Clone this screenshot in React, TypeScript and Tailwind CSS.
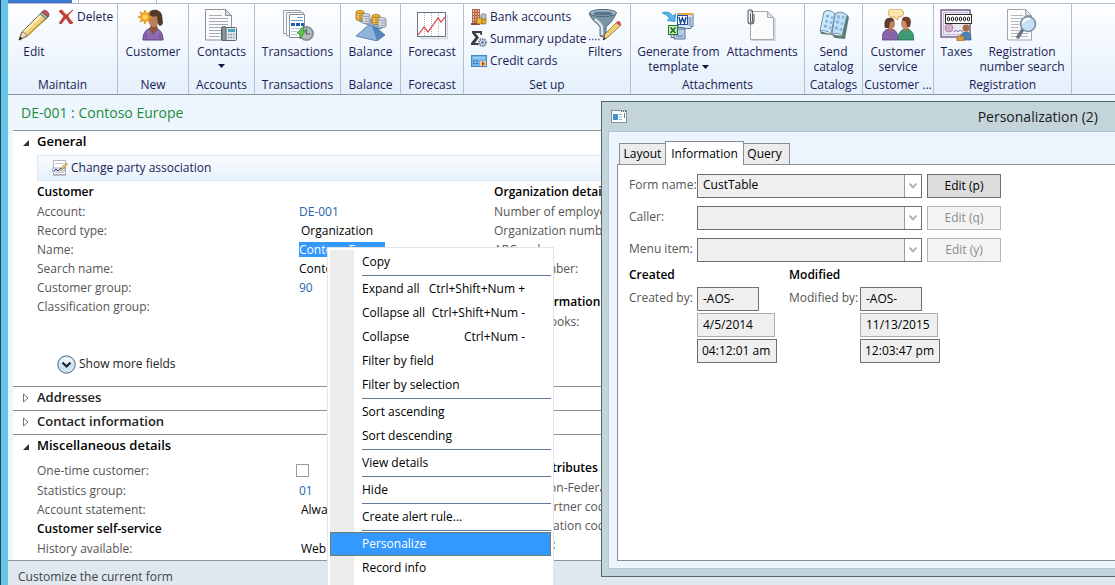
import { useState, type ReactNode } from 'react'
import clsx from 'clsx'

/* ---------- ribbon icons ---------- */

function PencilIcon() {
  return (
    <svg width="32" height="32" viewBox="0 0 32 32">
      <path d="M1 31l3-8L24 3l6 5L9 27z" fill="#f3d580" stroke="#5f5a4c" strokeWidth="1" />
      <path d="M5 24L25 4" stroke="#fff3bd" strokeWidth="2" />
      <path d="M9 27L28 9" stroke="#c69a45" strokeWidth="1.5" />
      <path d="M1 31l3-8c2 0 4 2 5 4z" fill="#eadbc0" stroke="#6b604d" strokeWidth=".8" />
      <path d="M1 31l1.200-3.500 2.300 2z" fill="#222" />
      <path d="M22 5l3-3 6 5-3 3z" fill="#9fb3ad" stroke="#56665f" strokeWidth=".8" />
      <path d="M25 2c2-2 6 1 6 4l-1 2-6-5z" fill="#c8505a" stroke="#7d3038" strokeWidth=".8" />
    </svg>
  )
}

function DeleteIcon() {
  return (
    <svg width="16" height="16" viewBox="0 0 16 16">
      <path d="M1 2l3-1c2 3 3 4 5 5 2-2 4-4 6-5-2 2-4 4-5 6 1 3 3 4 5 7l-3 1c-2-3-3-4-4-6-2 2-3 4-5 6l-2-1c2-2 3-4 5-7-2-1-3-3-5-5z" fill="#cf3b34" stroke="#9c2a28" strokeWidth=".6" />
    </svg>
  )
}

function CustomerIcon() {
  return (
    <svg width="32" height="32" viewBox="0 0 32 32">
      <path d="M6 31c0-8 4-12 10-12s10 4 10 12z" fill="#8f6bb4" stroke="#5c4283" />
      <path d="M12 20l4 6 5-6-1-4h-6z" fill="#8a5a3a" />
      <ellipse cx="16.500" cy="11" rx="5" ry="7" fill="#b98159" />
      <path d="M11 5c2-5 8-5 11-3 4 2 3 7 4 11 0 4-4 5-5 2l-1-8c-3 1-6 1-9-2z" fill="#57392a" />
      <path d="M9 25v6M23 25v6" stroke="#6c4d95" />
      <path d="M8 1l1.500 3.500L13 3l-1.500 3.500L15 8l-3.500 1.500L13 13l-3.500-1.500L8 15l-1.500-3.500L3 13l1.500-3.500L1 8l3.500-1.500L3 3l3.500 1.500z" fill="#f6a81c" stroke="#dd8412" strokeWidth=".7" />
      <circle cx="8" cy="8" r="2.500" fill="#ffd65c" />
    </svg>
  )
}

function ContactsIcon() {
  return (
    <svg width="32" height="32" viewBox="0 0 32 32">
      <path d="M.5.500h20l6 6V31H.5z" fill="#fbfbfc" stroke="#8c9097" />
      <path d="M20.500.500v6h6z" fill="#d6d9de" stroke="#8c9097" />
      <path d="M4 6.500h13M4 9.500h19M4 12.500h19M4 15.500h19M4 18.500h13M4 21.500h12M4 24.500h12M4 27.500h11" stroke="#a5abb5" />
      <rect x="16.500" y="18.500" width="15" height="13" rx="1" fill="#dfe6ea" stroke="#5b6871" />
      <rect x="17" y="17.500" width="4" height="14" rx="1.500" fill="#8a989f" stroke="#4f5c64" />
      <rect x="23" y="20" width="7" height="3" fill="#47a5cb" />
      <path d="M23 25.500h7M23 28.500h7" stroke="#8b979e" strokeDasharray="1.500 1" strokeWidth="1.500" />
    </svg>
  )
}

function TransactionsIcon() {
  return (
    <svg width="32" height="32" viewBox="0 0 32 32">
      <path d="M1.500 1.500h17v23h-17z" fill="#f7f8fa" stroke="#9ba1a8" />
      <path d="M4.500 3.500h17v23h-17z" fill="#f7f8fa" stroke="#9ba1a8" />
      <path d="M7.500 5.500h15v23h-15z" fill="#fff" stroke="#8a9199" />
      <path d="M15 8.500h6M9 11.500h12" stroke="#6f9fcf" />
      <path d="M9 14h4v3H9zM14 14h4v3h-4zM19 14h3v3h-3z" fill="#1f5fa8" />
      <path d="M9 19.500h13M9 22.500h6M9 25.500h6" stroke="#b6c8dd" />
      <circle cx="24.500" cy="24.500" r="6.500" fill="#b4bac0" stroke="#8a9299" strokeWidth="2" />
      <path d="M24.500 20v5h4" fill="none" stroke="#59636c" strokeWidth="1.200" />
      <path d="M15 24l7-7-1 5 3-1-6 9v-5z" fill="#5fc94b" stroke="#338a2c" strokeWidth=".8" />
    </svg>
  )
}

function Coins({ x, y, c, d }: { x: number; y: number; c: string; d: string }) {
  return (
    <g transform={`translate(${x} ${y})`}>
      <path d="M0 2v7c0 2 8 2 8 0V2z" fill={c} stroke={d} strokeWidth=".7" />
      <path d="M0 4.500c0 2 8 2 8 0M0 7c0 2 8 2 8 0" fill="none" stroke={d} strokeWidth=".7" />
      <ellipse cx="4" cy="2" rx="4" ry="1.600" fill={c} stroke={d} strokeWidth=".7" />
      <path d="M2 4v5" stroke="#fff" strokeOpacity=".6" />
    </g>
  )
}

function BalanceIcon() {
  return (
    <svg width="32" height="32" viewBox="0 0 32 32">
      <path d="M16 14L1 27l21 5 8-6z" fill="#8fb5de" stroke="#47719f" strokeWidth=".8" />
      <path d="M16 14l6 18 8-6z" fill="#5685ba" />
      <path d="M1 10l7 4 17 6 6-3-8-4-15-5z" fill="#8db1d8" stroke="#4e76a3" strokeWidth=".8" />
      <Coins x={1} y={1} c="#f0b42f" d="#9b6b13" />
      <Coins x={7} y={4} c="#d5dade" d="#7b858c" />
      <Coins x={17} y={5} c="#f0b42f" d="#9b6b13" />
      <Coins x={23} y={8} c="#d5dade" d="#7b858c" />
    </svg>
  )
}

function ForecastIcon() {
  return (
    <svg width="32" height="32" viewBox="0 0 32 32">
      <path d="M4 29.500h27.500V6" fill="none" stroke="#d4d8dc" strokeWidth="1.500" />
      <rect x="1.500" y="3.500" width="28" height="24" fill="#fff" stroke="#6c7480" />
      <path d="M8.500 4v23M15.500 4v23M22.500 4v23" stroke="#b0b6bd" strokeDasharray="1 1" />
      <path d="M2 26l6-8 4 5 10-14 3 4 4-5" fill="none" stroke="#d9393b" strokeWidth="1.200" />
    </svg>
  )
}

function BankIcon() {
  return (
    <svg width="16" height="16" viewBox="0 0 16 16">
      <path d="M1 0h8v16H1z" fill="#b5654c" />
      <path d="M2.500 1v13M5 1v13M7.500 1v13" stroke="#f0ccb4" strokeDasharray="2 1" />
      <path d="M0 14h7v2H0z" fill="#7c4d42" />
      <rect x="10" y="5" width="5" height="7" rx="1" fill="#b9c0c6" stroke="#69727a" strokeWidth=".7" />
      <rect x="6" y="9" width="5" height="6" rx="1" fill="#f4bd3c" stroke="#8d6414" strokeWidth=".7" />
      <rect x="11" y="10" width="4" height="5" rx="1" fill="#e9ac2c" stroke="#8d6414" strokeWidth=".7" />
    </svg>
  )
}

function SummaryIcon() {
  return (
    <svg width="16" height="16" viewBox="0 0 16 16">
      <path d="M1 0h10v4H9.500L9 2H4.500l3.500 4.500L4 12h4v2H0v-2l4.500-5.500L1 2z" fill="#3b3e44" />
      <circle cx="11.500" cy="11.500" r="3.500" fill="#c4d7e8" stroke="#6f8ba6" strokeWidth="2" strokeDasharray="1.500 .7" />
      <circle cx="11.500" cy="11.500" r="1.200" fill="#56708a" />
    </svg>
  )
}

function CreditCardIcon() {
  return (
    <svg width="16" height="16" viewBox="0 0 16 16">
      <rect x=".5" y="2.500" width="15" height="11" fill="#72b5ea" stroke="#4188c6" />
      <path d="M2 5h12" stroke="#bfe0f8" />
      <path d="M2 8h5M2 10.500h5" stroke="#2c6fb2" strokeDasharray="2 1" />
      <rect x="9" y="8" width="6" height="5" fill="#f3c98e" />
      <path d="M11 8l3 3-3 2z" fill="#c93c23" />
    </svg>
  )
}

function FilterIcon() {
  return (
    <svg width="32" height="32" viewBox="0 0 32 32">
      <path d="M0 4c2 7 8 10 11 14v9l6 2V18c4-4 8-7 10-14z" fill="#7a93a5" stroke="#45596a" strokeWidth=".8" />
      <path d="M6 10c3 3 6 5 7 8v8" fill="none" stroke="#dbe8f0" strokeWidth="2.500" />
      <ellipse cx="14" cy="4" rx="13.500" ry="3.500" fill="#a7bccb" stroke="#4c6274" />
      <ellipse cx="14" cy="4.500" rx="10" ry="2" fill="#58748b" />
      <path d="M14 31l2-6 12-12 4 3-13 12z" fill="#f4cf71" stroke="#7b6535" strokeWidth=".8" />
      <path d="M27 14l2-2c2 0 3 2 3 4l-1 1z" fill="#cb4b52" />
      <path d="M14 31l1-3 2 2z" fill="#222" />
      <path d="M0 30.500h12" stroke="#5960a6" strokeWidth="1.500" strokeDasharray="1.500 1.500" />
    </svg>
  )
}

function GenerateIcon() {
  return (
    <svg width="32" height="32" viewBox="0 0 32 32">
      <path d="M16 4.500h15v13h-2v2H16z" fill="#dfe8f2" stroke="#58779c" />
      <path d="M17 4h14v2H17z" fill="#f1a540" />
      <path d="M28 8v9" stroke="#90a9c4" strokeWidth="3" />
      <path d="M9 18.500h13v10H9z" fill="#d3e2f1" stroke="#58779c" />
      <path d="M12 20h11v10H12z" fill="#b5cce4" stroke="#58779c" />
      <path d="M14 27h7" stroke="#58779c" />
      <rect x="15.500" y="6.500" width="10" height="9" fill="#fff" stroke="#20539c" />
      <path d="M17 8l1.500 6L20.500 9l2 5L24 8" fill="none" stroke="#1c4fa1" strokeWidth="1.500" />
      <rect x="6.500" y="16.500" width="9" height="9" fill="#cdebb5" stroke="#23762a" />
      <path d="M8.500 18.500l5 5.500M13.500 18.500l-5 5.500" stroke="#1b702a" strokeWidth="1.700" />
      <path d="M0 4c4-2 8-1 11 3l2.500-2.500-.5 8-8-1 2.500-2C5 6 3 5 0 4z" fill="#54b4e8" stroke="#2b86bf" strokeWidth=".7" />
    </svg>
  )
}

function AttachmentIcon() {
  return (
    <svg width="32" height="32" viewBox="0 0 32 32">
      <path d="M5 31.500h24V9" fill="none" stroke="#d0d3d8" strokeWidth="1.500" />
      <path d="M4.500 2.500h17l6 6v22h-23z" fill="#fbfbfc" stroke="#a4a8ae" />
      <path d="M21.500 2.500v6h6z" fill="#e1e4e8" stroke="#a4a8ae" />
      <path d="M4.500 5v7c0 2 2 2 2 0V3c0-3-4.500-3-4.500 0v9c0 4 6 4 6 0V5" fill="none" stroke="#5c6067" strokeWidth="1.100" />
    </svg>
  )
}

function CatalogIcon() {
  return (
    <svg width="32" height="32" viewBox="0 0 32 32">
      <path d="M2 22l1 3 11 1 3 3 10 1 4-22-2-2-5 21-12-2z" fill="#5f7d6c" />
      <path d="M6 3c4-3 8-1 11 2l-4 20c-3-3-7-4-11-3z" fill="#d4e9f8" stroke="#4d7393" strokeWidth=".8" />
      <path d="M17 5c4-3 8-2 12 1l-5 21c-3-3-6-3-10-2z" fill="#c4dff3" stroke="#4d7393" strokeWidth=".8" />
      <path d="M8 7l3 .5M13 8l2 1M7 12l3 .5M12 13l2 1M6 17l3 .5M11 18l2 1M19 8l3 0M24 8l2 1M18 13l3 0M23 14l2 1M17 19l3 0M22 20l2 1" stroke="#82b7e0" strokeWidth="3" />
    </svg>
  )
}

function ServiceIcon() {
  return (
    <svg width="32" height="32" viewBox="0 0 32 32">
      <path d="M0 31c0-7 2-11 8-11s8 4 8 11z" fill="#8864ad" stroke="#5f4588" strokeWidth=".8" />
      <path d="M16 31c0-7 3-11 8-11s8 4 8 11z" fill="#3f9b76" stroke="#286b50" strokeWidth=".8" />
      <path d="M6 19l2 5 3-4zM22 19l2 5 3-5z" fill="#a5734f" />
      <ellipse cx="9" cy="14.500" rx="4" ry="5.500" fill="#bd8660" />
      <path d="M3 19c-1-4-1-9 3-10 3-1 6 0 6 3l-4 1-1 6z" fill="#5e3d2c" />
      <ellipse cx="23" cy="14.500" rx="4" ry="5.500" fill="#c99068" />
      <path d="M28 18c1-4 2-8-2-10-3-1-6 0-6 3l4 2 1 5z" fill="#70412d" />
      <path d="M10 0h7c6 0 6 8 0 8h-1l0 3-4-3h-2c-5 0-5-8 0-8z" fill="#fbe7ac" stroke="#c4943d" strokeWidth=".8" />
    </svg>
  )
}

function TaxesIcon() {
  return (
    <svg width="32" height="32" viewBox="0 0 32 32">
      <rect x="1" y="1" width="29" height="27" fill="#efe8f5" stroke="#75678c" strokeWidth="1.500" />
      <rect x="3.500" y="3.500" width="24" height="22" fill="none" stroke="#a48ec0" strokeDasharray="1 1" />
      <circle cx="9" cy="19" r="4" fill="#d1b0c6" stroke="#a986a5" />
      <path d="M14 23c2-4 3 1 5-1s2 1 4 0" fill="none" stroke="#6b53a0" />
      <rect x="5.500" y="5.500" width="26" height="9" fill="#fff" stroke="#2b2b2b" />
      {[9, 13, 17, 21, 25, 29].map((cx) => (
        <ellipse key={cx} cx={cx - 0.5} cy="10" rx="1.200" ry="1.900" fill="none" stroke="#111" />
      ))}
      <path d="M20 31c0-5 2-8 6-8s5 3 5 8z" fill="#4f82b6" stroke="#315c89" strokeWidth=".7" />
      <circle cx="26" cy="19" r="3.500" fill="#a26c46" />
      <path d="M17 27h7v5h-7z" fill="#d69a4d" stroke="#936125" strokeWidth=".7" />
    </svg>
  )
}

function SearchDocIcon() {
  return (
    <svg width="32" height="32" viewBox="0 0 32 32">
      <path d="M1.500.500h18l6 6V31h-24z" fill="#fbfbfc" stroke="#a1a5ab" />
      <path d="M19.500.500v6h6z" fill="#dde0e5" stroke="#a1a5ab" />
      <path d="M5 6.500h12M5 9.500h17M5 12.500h8M5 15.500h8M5 18.500h8M5 21.500h8M5 24.500h17M5 27.500h17" stroke="#b4b9c1" />
      <path d="M17 20l-5 8" stroke="#6c7786" strokeWidth="3.500" strokeLinecap="round" />
      <circle cx="22" cy="15" r="7.500" fill="#c5e0f5" stroke="#7b8b9d" strokeWidth="1.600" />
      <path d="M17 14c1-3 4-5 7-4" fill="none" stroke="#fff" strokeWidth="2" />
    </svg>
  )
}

function PartyIcon() {
  return (
    <svg width="16" height="16" viewBox="0 0 16 16">
      <rect x="1.500" y=".5" width="12" height="14" fill="#fff" stroke="#b4b8be" />
      <path d="M3 3.500h9M3 12.500h9" stroke="#c9cdd3" />
      <path d="M0 8h13v3H0z" fill="#e9eef5" stroke="#8791a0" strokeWidth=".7" />
      <path d="M2 11l2-2 2 2 3-3" fill="none" stroke="#34476b" />
      <path d="M9 10l1-3 4-4 1.500 1.500-4 4z" fill="#f0cc72" stroke="#927435" strokeWidth=".6" />
      <path d="M1 15h13" stroke="#8d949d" />
    </svg>
  )
}

function WindowIcon() {
  return (
    <svg width="16" height="13" viewBox="0 0 16 13">
      <rect x=".5" y=".5" width="15" height="12" fill="#fdfeff" stroke="#8494a0" />
      <path d="M10 1.500h1M12 1.500h1M14 1.500h1" stroke="#50606c" />
      <rect x="2" y="4" width="5" height="6" fill="#3f93c7" />
      <path d="M8 4.500h3M8 7h3M8 9.500h3" stroke="#a8b5be" />
      <path d="M13.500 3v5" stroke="#6e8190" />
    </svg>
  )
}

/* ---------- ribbon ---------- */

function RibbonGroup({ label, width, children }: { label: string; width: string; children: ReactNode }) {
  return (
    <section className={clsx('flex shrink-0 flex-col border-r border-[#b4c0cf]', width)}>
      <div className="flex h-[73px] justify-center pt-[5px]">{children}</div>
      <div className="text-center leading-[15px]">{label}</div>
    </section>
  )
}

function BigButton({ icon, lines, arrow, className }: { icon: ReactNode; lines: string[]; arrow?: boolean; className?: string }) {
  return (
    <button className={clsx('flex flex-col items-center whitespace-nowrap leading-[15px]', className)}>
      <span className="mb-[3px]">{icon}</span>
      {lines.map((line, i) => (
        <span key={line} className="flex items-center gap-[3px]">
          {line}
          {arrow && i === 1 && <Caret />}
        </span>
      ))}
      {arrow && lines.length === 1 && (
        <span className="flex h-[13px] items-center">
          <Caret />
        </span>
      )}
    </button>
  )
}

function Caret() {
  return (
    <svg width="7" height="4" viewBox="0 0 7 4">
      <path d="M0 0h7L3.500 4z" fill="#111638" />
    </svg>
  )
}

function SmallButton({ icon, label }: { icon: ReactNode; label: string }) {
  return (
    <button className="flex h-[22px] items-center gap-[3px] whitespace-nowrap leading-4">
      {icon}
      {label}
    </button>
  )
}

function Ribbon() {
  return (
    <div className="flex h-[92px] shrink-0 overflow-hidden border-y border-t-[#b4bcc6] border-b-[#8e959e] bg-gradient-to-b from-[#fdfeff] to-[#e4f0fc] text-[#1b1c55]">
      <RibbonGroup label="Maintain" width="w-[110px]">
        <div className="flex w-full items-start pl-[10px]">
          <BigButton icon={<PencilIcon />} lines={['Edit']} />
          <div className="-mt-[3px] pl-2">
            <SmallButton icon={<DeleteIcon />} label="Delete" />
          </div>
        </div>
      </RibbonGroup>
      <RibbonGroup label="New" width="w-[71px]">
        <BigButton icon={<CustomerIcon />} lines={['Customer']} />
      </RibbonGroup>
      <RibbonGroup label="Accounts" width="w-[66px]">
        <BigButton icon={<ContactsIcon />} lines={['Contacts']} arrow />
      </RibbonGroup>
      <RibbonGroup label="Transactions" width="w-[86px]">
        <BigButton icon={<TransactionsIcon />} lines={['Transactions']} />
      </RibbonGroup>
      <RibbonGroup label="Balance" width="w-[60px]">
        <BigButton icon={<BalanceIcon />} lines={['Balance']} />
      </RibbonGroup>
      <RibbonGroup label="Forecast" width="w-[63px]">
        <BigButton icon={<ForecastIcon />} lines={['Forecast']} />
      </RibbonGroup>
      <RibbonGroup label="Set up" width="w-[167px]">
        <div className="flex w-full items-start justify-between pr-2 pl-[7px]">
          <div className="-mt-[3px]">
            <SmallButton icon={<BankIcon />} label="Bank accounts" />
            <SmallButton icon={<SummaryIcon />} label="Summary update" />
            <SmallButton icon={<CreditCardIcon />} label="Credit cards" />
          </div>
          <BigButton icon={<FilterIcon />} lines={['Filters']} />
        </div>
      </RibbonGroup>
      <RibbonGroup label="Attachments" width="w-[174px]">
        <div className="flex items-start gap-[7px]">
          <BigButton icon={<GenerateIcon />} lines={['Generate from', 'template']} arrow />
          <BigButton icon={<AttachmentIcon />} lines={['Attachments']} />
        </div>
      </RibbonGroup>
      <RibbonGroup label="Catalogs" width="w-[58px]">
        <BigButton icon={<CatalogIcon />} lines={['Send', 'catalog']} />
      </RibbonGroup>
      <RibbonGroup label="Customer ..." width="w-[71px]">
        <BigButton icon={<ServiceIcon />} lines={['Customer', 'service']} />
      </RibbonGroup>
      <RibbonGroup label="Registration" width="w-[138px]">
        <div className="flex items-start gap-[7px]">
          <BigButton icon={<TaxesIcon />} lines={['Taxes']} />
          <BigButton icon={<SearchDocIcon />} lines={['Registration', 'number search']} />
        </div>
      </RibbonGroup>
    </div>
  )
}

/* ---------- customer form ---------- */

function Row({ label, children }: { label: string; children?: ReactNode }) {
  return (
    <div className="flex h-[19px] items-center whitespace-nowrap">
      <span className="w-[262px] shrink-0 text-[#555]">{label}</span>
      {children}
    </div>
  )
}

function SubHeading({ children }: { children: ReactNode }) {
  return <h3 className="flex h-5 items-center font-semibold whitespace-nowrap text-black">{children}</h3>
}

function SectionHeader({ title, open }: { title: string; open?: boolean }) {
  return (
    <h2 className="h-6 border-t border-[#8f8f8f]">
      <button className={clsx('flex h-[22px] items-center pl-[10px] text-[13px] font-semibold', open ? 'text-black' : 'text-[#222]')}>
        <svg width="14" height="10" viewBox="0 0 14 10">
          {open ? <path d="M6 3v6H0z" fill="#333" /> : <path d="M.500 1v8l4.500-4z" fill="#fff" stroke="#777" />}
        </svg>
        {title}
      </button>
    </h2>
  )
}

function CustomerForm() {
  return (
    <main className="ml-[5px] min-h-0 flex-1 overflow-hidden bg-white">
      <SectionHeader title="General" open />
      <div className="mt-px ml-6 flex h-[26px] items-center border border-[#dce8f3] bg-gradient-to-b from-[#fafcff] to-[#e6f1fc] pl-[14px] text-[#1b1c55]">
        <button className="flex items-center gap-[3px]">
          <PartyIcon />
          Change party association
        </button>
      </div>
      <div className="flex h-[205px] pt-px pl-6">
        <div className="w-[457px] shrink-0">
          <SubHeading>Customer</SubHeading>
          <Row label="Account:">
            <a href="#" className="text-[#1f66ad]">DE-001</a>
          </Row>
          <Row label="Record type:">
            <span className="pl-[2px] text-black">Organization</span>
          </Row>
          <Row label="Name:">
            <span className="h-[15px] w-[86px] bg-[#3399ff] leading-[15px] text-white">Contoso Europe</span>
          </Row>
          <Row label="Search name:">
            <span className="text-black">Contoso Europe</span>
          </Row>
          <Row label="Customer group:">
            <a href="#" className="text-[#1f66ad]">90</a>
          </Row>
          <Row label="Classification group:" />
          <button className="mt-9 ml-5 flex h-6 items-center gap-[3px] text-[#222]">
            <svg width="19" height="19" viewBox="0 0 19 19">
              <circle cx="9.500" cy="9.500" r="8.700" fill="#cfe4f3" stroke="#4b6a80" />
              <path d="M3 8a6.500 5.500 0 0 1 13 0z" fill="#eff8fe" />
              <path d="M5.500 7.500l4 4 4-4" fill="none" stroke="#1d2430" strokeWidth="2.200" />
            </svg>
            Show more fields
          </button>
        </div>
        <div>
          <SubHeading>Organization details</SubHeading>
          <Row label="Number of employees:" />
          <Row label="Organization number:" />
          <Row label="ABC code:" />
          <Row label="DUNS number:" />
          <div className="mt-[14px]">
            <SubHeading>Other information</SubHeading>
          </div>
          <Row label="Address books:" />
        </div>
      </div>
      <SectionHeader title="Addresses" />
      <SectionHeader title="Contact information" />
      <SectionHeader title="Miscellaneous details" open />
      <div className="flex pl-6">
        <div className="w-[457px] shrink-0 pt-[2px]">
          <label className="flex h-[21px] items-center text-[#555]">
            <span className="w-[259px]">One-time customer:</span>
            <input type="checkbox" className="h-[13px] w-[13px] appearance-none border border-[#9a9a9a] bg-white" />
          </label>
          <Row label="Statistics group:">
            <a href="#" className="text-[#1f66ad]">01</a>
          </Row>
          <Row label="Account statement:">
            <span className="pl-[2px] text-black">Always</span>
          </Row>
          <SubHeading>Customer self-service</SubHeading>
          <Row label="History available:">
            <span className="pl-[2px] text-black">Web</span>
          </Row>
        </div>
        <div>
          <SubHeading>Federal attributes</SubHeading>
          <Row label="Federal/Non-Federal:" />
          <Row label="Trading partner code:" />
          <Row label="Agency location code:" />
          <Row label="Fund code:" />
        </div>
      </div>
    </main>
  )
}

/* ---------- context menu ---------- */

const menuGroups = [
  [{ label: 'Copy' }],
  [
    { label: 'Expand all', keys: 'Ctrl+Shift+Num +' },
    { label: 'Collapse all', keys: 'Ctrl+Shift+Num -' },
    { label: 'Collapse', keys: 'Ctrl+Num -' },
    { label: 'Filter by field' },
    { label: 'Filter by selection' },
  ],
  [{ label: 'Sort ascending' }, { label: 'Sort descending' }],
  [{ label: 'View details' }],
  [{ label: 'Hide' }],
  [{ label: 'Create alert rule...' }],
  [{ label: 'Personalize' }, { label: 'Record info' }],
] as { label: string; keys?: string }[][]

function ContextMenu() {
  const [active, setActive] = useState('Personalize')
  return (
    <div role="menu" className="absolute top-[247px] left-[326px] w-[227px] border border-[#e4e4e4] bg-white p-[2px]">
      <div className="bg-gradient-to-r from-[#ececec] from-[24px] to-white to-[24px] pb-6">
        {menuGroups.map((group, g) => (
          <div key={g}>
            {g > 0 && <div className="my-px ml-8 h-px bg-[#5f7ca0]" />}
            {group.map((item) => (
              <button
                key={item.label}
                role="menuitem"
                onMouseEnter={() => setActive(item.label)}
                className={clsx(
                  'flex h-6 w-full items-center justify-between border pr-[25px] pl-[31px] whitespace-nowrap',
                  active === item.label ? 'border-[#6f7f6c] bg-[#3399ff] text-white' : 'border-transparent text-black'
                )}
              >
                <span>{item.label}</span>
                {item.keys && <span>{item.keys}</span>}
              </button>
            ))}
          </div>
        ))}
      </div>
    </div>
  )
}

/* ---------- personalization dialog ---------- */

function ComboRow({ id, label, value, shortcut, enabled }: { id: string; label: string; value?: string; shortcut: string; enabled?: boolean }) {
  return (
    <div className="flex items-center">
      <label htmlFor={id} className="w-[68px] shrink-0 pb-[2px] whitespace-nowrap text-[#555]">{label}</label>
      <div className="relative w-[225px] shrink-0">
        <select id={id} defaultValue={value} className="block h-6 w-full appearance-none border border-[#6e7074] bg-[#efefef] px-[5px] pb-[2px] text-black">
          <option>{value ?? ''}</option>
        </select>
        <span className="pointer-events-none absolute top-px right-px flex h-[22px] w-[17px] items-center justify-center border-l border-[#9a9a9a] bg-white">
          <svg width="8" height="6" viewBox="0 0 8 6">
            <path d="M.500.500L4 4.500 7.500.500" fill="none" stroke="#aaa" strokeWidth="1.800" />
          </svg>
        </span>
      </div>
      <button
        disabled={!enabled}
        className={clsx(
          'ml-[5px] h-6 w-[74px] border',
          enabled ? 'border-[#6e7074] bg-[#dcdcdc] text-black' : 'border-[#b5b5b5] bg-[#f3f3f3] text-[#8b8b8b]'
        )}
      >
        {shortcut}
      </button>
    </div>
  )
}

function StampBlock({ title, label, labelWidth, by, date, time }: { title: string; label: string; labelWidth: string; by: string; date: string; time: string }) {
  return (
    <div>
      <h3 className="flex h-[25px] items-center font-semibold text-black">{title}</h3>
      <div className="flex">
        <label htmlFor={title} className={clsx('mt-[3px] shrink-0 leading-4 whitespace-nowrap text-[#555]', labelWidth)}>{label}</label>
        <div className="flex flex-col items-start gap-[2px]">
          <input id={title} readOnly defaultValue={by} className="h-6 w-[62px] border border-[#6e7074] bg-[#efefef] px-[5px] pb-[2px] text-black" />
          <input aria-label={`${title} date`} readOnly defaultValue={date} className="h-6 w-[78px] border border-[#acacac] bg-[#efefef] px-[5px] pb-[2px] text-black" />
          <input aria-label={`${title} time`} readOnly defaultValue={time} className="h-6 w-[80px] border border-[#6e7074] bg-[#efefef] pb-[2px] pl-1 text-black" />
        </div>
      </div>
    </div>
  )
}

function PersonalizationDialog() {
  return (
    <div role="dialog" aria-label="Personalization" className="absolute top-[101px] right-0 bottom-[8px] left-[600px] flex flex-col border border-r-0 border-[#55666f] bg-[#c3d4db] pb-[7px] pl-[6px]">
      <div className="flex h-[29px] shrink-0 items-center pr-[17px] pl-[3px]">
        <WindowIcon />
        <h1 className="ml-auto text-[14px] text-[#1a1a1a]">Personalization (2)</h1>
      </div>
      <div className="flex min-h-0 flex-1 flex-col border border-r-0 border-[#b3c5ce] bg-[#ecf5fe] pt-[9px] pb-[7px] pl-2">
        <div role="tablist" className="relative z-10 -mb-px flex h-6 items-end pl-[2px]">
          <button role="tab" className="h-[22px] w-[46px] border border-r-0 border-[#8a8d93] bg-[#ececec] text-black">Layout</button>
          <button role="tab" aria-selected className="h-6 w-[79px] border border-b-0 border-[#8a8d93] bg-white text-black">Information</button>
          <button role="tab" className="h-[22px] w-[46px] border border-l-0 border-[#8a8d93] bg-[#ececec] pr-1 text-black">Query</button>
        </div>
        <div role="tabpanel" className="min-h-0 flex-1 border border-r-0 border-[#8a8d93] bg-white pt-[9px] pl-[11px]">
          <div className="flex flex-col gap-2">
            <ComboRow id="form-name" label="Form name:" value="CustTable" shortcut="Edit (p)" enabled />
            <ComboRow id="caller" label="Caller:" shortcut="Edit (q)" />
            <ComboRow id="menu-item" label="Menu item:" shortcut="Edit (y)" />
          </div>
          <div className="flex gap-3">
            <StampBlock title="Created" label="Created by:" labelWidth="w-[68px]" by="-AOS-" date="4/5/2014" time="04:12:01 am" />
            <StampBlock title="Modified" label="Modified by:" labelWidth="w-[71px]" by="-AOS-" date="11/13/2015" time="12:03:47 pm" />
          </div>
        </div>
      </div>
    </div>
  )
}

export default function App() {
  return (
    <div className="relative flex h-screen flex-col overflow-hidden border-l border-[#17455c] font-['Open_Sans','Noto_Sans',sans-serif] text-[12px]">
      <div className="flex min-h-0 flex-1 flex-col border-l-[7px] border-[#66c5e7] bg-[#edf6fd]">
        <div className="flex h-[3px] shrink-0 bg-[#fdfeff]">
          <div className="w-16 bg-[#3b78d0]" />
          <div className="ml-[6px] w-[79px] border-x border-[#b4bcc6] bg-white" />
        </div>
        <Ribbon />
        <h1 className="flex h-[35px] shrink-0 items-center pl-[13px] text-[14px] text-[#1d8a3d]">DE-001 : Contoso Europe</h1>
        <CustomerForm />
        <footer className="flex h-[25px] shrink-0 items-center border-t border-[#8e959e] bg-[#dfe7ef] pt-2 pl-[10px] text-[#444]">
          Customize the current form
        </footer>
      </div>
      <ContextMenu />
      <PersonalizationDialog />
    </div>
  )
}
